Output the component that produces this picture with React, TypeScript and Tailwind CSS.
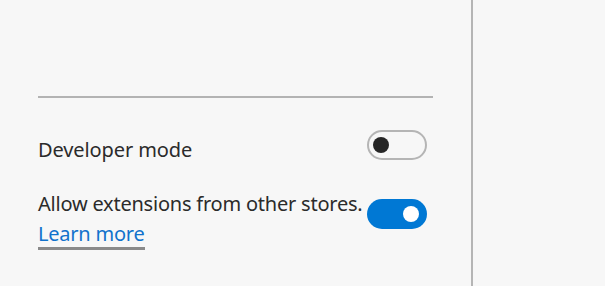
import React from "react";

function Toggle({ on }: { on: boolean }) {
  if (on) {
    return (
      <div className="flex h-[30px] w-[60px] shrink-0 items-center justify-end rounded-full bg-[#0078d4] pr-[8px]">
        <div className="h-[16px] w-[16px] rounded-full bg-white" />
      </div>
    );
  }
  return (
    <div className="flex h-[30px] w-[60px] shrink-0 items-center rounded-full border-2 border-[#b5b5b5] pl-[4px]">
      <div className="h-[16px] w-[16px] rounded-full bg-[#262626]" />
    </div>
  );
}

export default function App() {
  return (
    <div
      className="flex h-[286px] w-[605px] bg-[#f7f7f7] text-[#2b2b2b]"
      style={{ fontFamily: '"Noto Sans", "Open Sans", sans-serif' }}
    >
      <div className="w-[473px] shrink-0 border-r-2 border-[#b5b5b5] pl-[38px] pr-[38px] pt-[96px]">
        <div className="h-[2px] w-[395px] bg-[#b3b3b3]" />

        {/* Developer mode */}
        <div className="mt-[32px] flex w-[389px] items-start justify-between">
          <span className="mt-[5px] text-[20px] leading-[30px] tracking-[-0.1px]">Developer mode</span>
          <Toggle on={false} />
        </div>

        {/* Other stores */}
        <div className="mt-[24px] flex w-[389px] items-start justify-between">
          <div className="whitespace-nowrap text-[20px] leading-[30px] tracking-[-0.22px]">
            <div>Allow extensions from other stores.</div>
            <a className="inline-block border-b-[3px] border-[#8a8a8a] leading-[26px] text-[#1172cc]">
              Learn more
            </a>
          </div>
          <div className="mt-[10px]">
            <Toggle on={true} />
          </div>
        </div>
      </div>
      <div className="flex-1" />
    </div>
  );
}
